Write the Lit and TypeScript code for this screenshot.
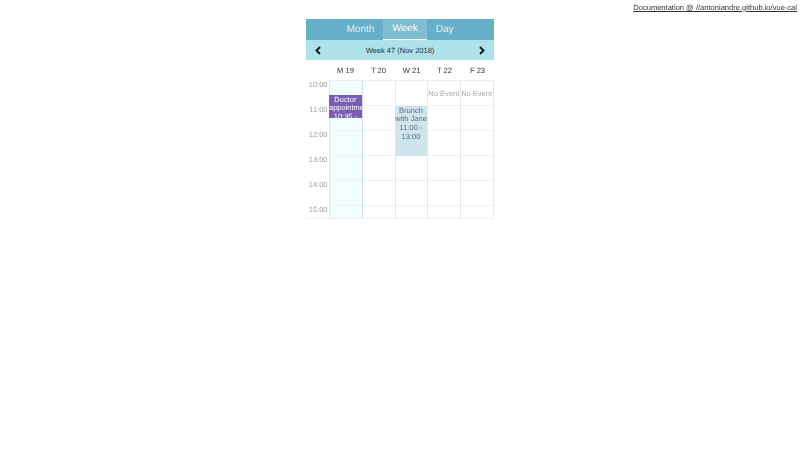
import { LitElement, html, css } from "lit";
import { customElement } from "lit/decorators.js";

const DAYS = ["M 19", "T 20", "W 21", "T 22", "F 23"];
const HOURS = ["10:00", "11:00", "12:00", "13:00", "14:00", "15:00"];

@customElement("app-root")
export class AppRoot extends LitElement {
  static styles = css`
    :host { display: block; width: 800px; height: 450px; background: #fff; position: relative; overflow: hidden;
      font-family: "Liberation Sans", Arial, sans-serif; color: #2c3e50; text-rendering: geometricPrecision; }
    .doc { position: absolute; top: 2px; right: 3px; font-size: 7.55px; line-height: 11px; color: #333; text-decoration: underline; white-space: nowrap; filter: grayscale(1); }
    .page { display: flex; justify-content: center; padding: 19px 0 0 0; filter: grayscale(0); opacity: .99; }
    .cal { width: 188px; height: 200px; display: flex; flex-direction: column; }
    .tabs { height: 21px; background: #64b0c8; display: flex; justify-content: center; color: #fff; font-size: 10px; }
    .tab { padding: 0 9px; display: flex; align-items: center; justify-content: center; color: rgba(255,255,255,.85); }
    .tab.on { background: #80bdd0; border-bottom: 1px solid #fff; box-sizing: border-box; color: #f4fbfd; padding-bottom: 2px; }
    .nav { height: 20px; background: #ade2ea; display: flex; align-items: center; justify-content: space-between; padding: 0 9px; font-size: 7.5px; color: #1f2d33; }
    .nav svg { display: block; width: 6px; height: 9px; }
    .heads { height: 20px; display: flex; padding-left: 23px; font-size: 7.6px; color: #333; }
    .heads div { flex: 1; display: flex; align-items: center; justify-content: center; }
    .body { flex: 1; display: flex; overflow: hidden; border-bottom: 1px solid #f0f0f0; box-sizing: border-box; }
    .times { width: 23px; flex: none; box-sizing: border-box; }
    .time { height: 25px; font-size: 7.5px; line-height: 10px; color: #a0a0a0; text-align: right; padding: 0 1.5px 0 0; box-sizing: border-box; }
    .grid { flex: 1; display: flex; border-top: 1px solid #eeeeee; }
    .day { flex: 1; position: relative; border-left: 1px solid #e8e8e8; min-width: 0; box-sizing: border-box;
      background: repeating-linear-gradient(to bottom, transparent 0, transparent 24px, #f2f2f2 24px, #f2f2f2 25px); }
    .day:last-child { border-right: 1px solid #e8e8e8; }
    .day.today { background-color: #f2fdff; border-left-color: #dfe9ec; }
    .day.after { border-left-color: #cfe0e4; }
    .none { position: absolute; top: 7.5px; left: -1px; right: 0; font-size: 7.5px; line-height: 10px; color: #aaa; text-align: center; white-space: nowrap; }
    .ev { position: absolute; left: -1px; right: 0; overflow: hidden; font-size: 7.5px; line-height: 8.8px; padding-top: 0.7px; text-align: center; box-sizing: border-box; }
    .ev.doctor { top: 14px; height: 23px; background: #7b5bb5; color: #fff; }
    .ev.brunch { top: 25px; height: 50px; background: #cfe5ee; color: #5b6f7a; }
  `;

  render() {
    return html`
      <a class="doc">Documentation @ //antoniandre.github.io/vue-cal</a>
      <div class="page">
        <div class="cal">
          <div class="tabs">
            <div class="tab">Month</div>
            <div class="tab on">Week</div>
            <div class="tab">Day</div>
          </div>
          <div class="nav">
            <svg viewBox="0 0 6 9"><path d="M5 1 1.5 4.5 5 8" fill="none" stroke="#111" stroke-width="1.8"/></svg>
            <span>Week 47 (Nov 2018)</span>
            <svg viewBox="0 0 6 9"><path d="M1 1 4.5 4.5 1 8" fill="none" stroke="#111" stroke-width="1.8"/></svg>
          </div>
          <div class="heads">${DAYS.map((d) => html`<div>${d}</div>`)}</div>
          <div class="body">
            <div class="times">${HOURS.map((h) => html`<div class="time">${h}</div>`)}</div>
            <div class="grid">
              <div class="day today"><div class="ev doctor">Doctor appointment 10:35 - 11:30</div></div>
              <div class="day after"></div>
              <div class="day"><div class="ev brunch">Brunch with Jane 11:00 - 13:00</div></div>
              <div class="day"><div class="none">No Event</div></div>
              <div class="day"><div class="none">No Event</div></div>
            </div>
          </div>
        </div>
      </div>
    `;
  }
}
